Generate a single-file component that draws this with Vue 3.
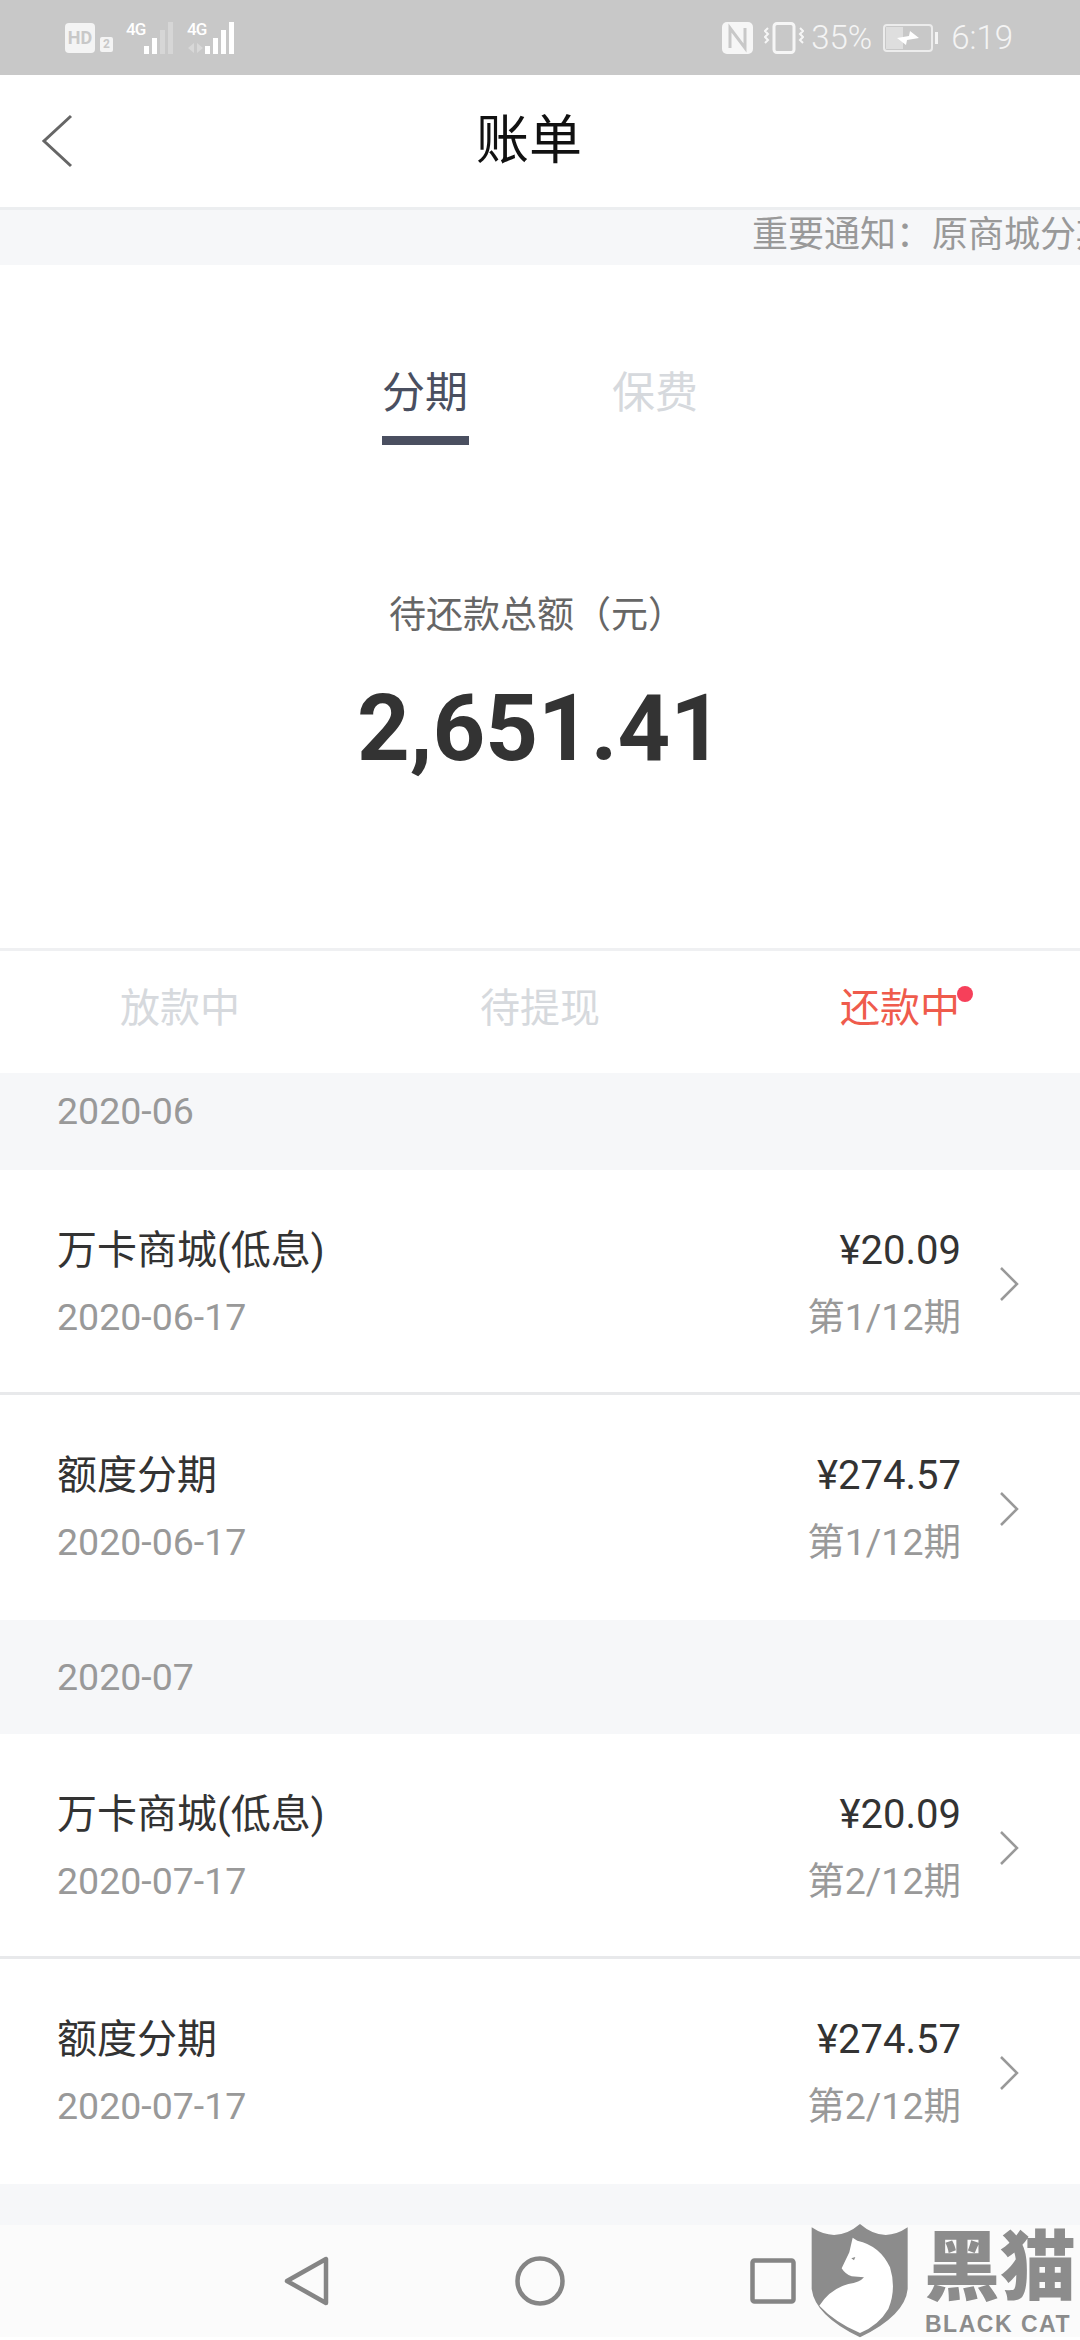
<script setup>
const groups = [
  {
    month: '2020-06',
    cls: 'first',
    bills: [
      { name: '万卡商城(低息)', date: '2020-06-17', amount: '¥20.09', term: '第1/12期' },
      { name: '额度分期', date: '2020-06-17', amount: '¥274.57', term: '第1/12期' }
    ]
  },
  {
    month: '2020-07',
    cls: '',
    bills: [
      { name: '万卡商城(低息)', date: '2020-07-17', amount: '¥20.09', term: '第2/12期' },
      { name: '额度分期', date: '2020-07-17', amount: '¥274.57', term: '第2/12期' }
    ]
  }
]
const signals = [
  { level: 1, arrows: false },
  { level: 3, arrows: true }
]
const barHeights = [8, 16, 24, 32]
</script>

<template>
  <div class="page">
    <div class="status">
      <div class="status-left">
        <span class="hd">HD</span>
        <span class="sim">2</span>
        <div v-for="(s, i) in signals" :key="i" class="signal">
          <div class="net-col">
            <span class="net">4G</span>
            <svg v-if="s.arrows" class="arrows" width="17" height="10" viewBox="0 0 17 10">
              <path d="M7 0v10L1 5zM10 0v10l6-5z" fill="#d8d8d8" />
            </svg>
          </div>
          <svg width="34" height="32" viewBox="0 0 34 32">
            <rect
              v-for="(h, n) in barHeights"
              :key="n"
              :x="n * 8 + 1"
              :y="32 - h"
              width="5"
              :height="h"
              :fill="n <= s.level ? '#ffffff' : '#d6d6d6'"
            />
          </svg>
        </div>
      </div>
      <div class="status-right">
        <svg width="31" height="32" viewBox="0 0 31 32">
          <rect width="31" height="32" rx="5" fill="#f6f6f6" />
          <path d="M8 26V6l15 20V6" fill="none" stroke="#c8c8c8" stroke-width="3" />
        </svg>
        <svg class="vibrate" width="40" height="32" viewBox="0 0 40 32" fill="none" stroke="#f6f6f6">
          <rect x="10" y="1.5" width="20" height="29" rx="3" stroke-width="3" />
          <path d="M4 6l-3 3 3 3-3 3 3 3-3 3M36 6l3 3-3 3 3 3-3 3 3 3" stroke-width="2" />
        </svg>
        <span class="pct">35%</span>
        <svg class="battery" width="56" height="28" viewBox="0 0 56 28">
          <rect x="1" y="1" width="48" height="26" rx="3" fill="none" stroke="#ececec" stroke-width="2" />
          <rect x="3" y="3" width="17" height="22" fill="#dedede" />
          <path d="M14 14l12-2 1-5 9 7-12 2-1 5z" fill="#fff" />
          <rect x="52" y="8" width="3" height="12" fill="#f4f4f4" />
        </svg>
        <span class="time">6:19</span>
      </div>
    </div>

    <div class="nav">
      <svg width="32" height="54" viewBox="0 0 32 54">
        <path d="M30 2L3 27l27 25" fill="none" stroke="#666" stroke-width="3" />
      </svg>
      <span class="nav-title">账单</span>
    </div>

    <div class="notice">
      <span>重要通知：原商城分期</span>
    </div>

    <div class="tabs">
      <div class="tab active">分期</div>
      <div class="tab">保费</div>
    </div>

    <div class="total">
      <div class="total-label">待还款总额（元）</div>
      <div class="total-value">2,651.41</div>
    </div>

    <div class="filters">
      <div class="filter">放款中</div>
      <div class="filter">待提现</div>
      <div class="filter on"><span class="dotted">还款中<i class="dot"></i></span></div>
    </div>

    <template v-for="g in groups" :key="g.month">
      <div class="month" :class="g.cls">{{ g.month }}</div>
      <div
        v-for="(b, i) in g.bills"
        :key="i"
        class="bill"
        :class="{ last: i === g.bills.length - 1 }"
      >
        <div class="bill-left">
          <div class="bill-name">{{ b.name }}</div>
          <div class="bill-sub">{{ b.date }}</div>
        </div>
        <div class="bill-right">
          <div class="bill-name">{{ b.amount }}</div>
          <div class="bill-sub">{{ b.term }}</div>
        </div>
        <svg class="chevron" width="20" height="34" viewBox="0 0 20 34">
          <path d="M2 1l16 16L2 33" fill="none" stroke="#999" stroke-width="2.5" />
        </svg>
      </div>
    </template>

    <div class="tail"></div>

    <div class="sysnav">
      <svg width="46" height="50" viewBox="0 0 46 50">
        <path d="M42 3v44L3 25z" fill="none" stroke="#858585" stroke-width="4.5" stroke-linejoin="round" />
      </svg>
      <svg width="50" height="50" viewBox="0 0 50 50">
        <circle cx="25" cy="25" r="22.5" fill="none" stroke="#858585" stroke-width="4.5" />
      </svg>
      <svg width="46" height="46" viewBox="0 0 46 46">
        <rect x="2.5" y="2.5" width="41" height="41" rx="2" fill="none" stroke="#858585" stroke-width="4.5" />
      </svg>
    </div>

    <div class="mark">
      <svg width="100" height="116" viewBox="90 102 300 348">
        <path d="M95 115Q170 165 240 105Q310 165 383 115V300Q375 380 240 445Q105 380 95 300Z" fill="#8c8c8c" />
        <path
          d="M218 146L232 155Q300 170 330 235Q350 300 325 360Q295 410 240 432Q165 400 118 350Q150 300 205 285Q240 280 252 265L215 262Q195 255 185 238L208 190Z"
          fill="#fff"
        />
        <path d="M214 208l12-4-4 10z" fill="#8c8c8c" />
      </svg>
      <div class="mark-text">
        <div class="mark-cn">黑猫</div>
        <div class="mark-en">BLACK CAT</div>
      </div>
    </div>
  </div>
</template>

<style>
html, body {
  margin: 0;
  background: #fff;
}
</style>

<style scoped>
.page {
  position: relative;
  width: 1080px;
  height: 2340px;
  overflow: hidden;
  background: #fff;
  font-family: Roboto, "Noto Sans CJK SC", sans-serif;
}
.status {
  height: 75px;
  background: #c8c8c8;
  color: #fff;
  display: flex;
  align-items: center;
  justify-content: space-between;
  padding: 0 67px 0 65px;
}
.status-left,
.status-right {
  display: flex;
  align-items: center;
}
.hd {
  width: 30px;
  height: 30px;
  background: #f4f4f4;
  border-radius: 4px;
  color: #c8c8c8;
  font-size: 18px;
  font-weight: 700;
  line-height: 30px;
  text-align: center;
}
.sim {
  width: 13px;
  height: 15px;
  margin: 13px 0 0 5px;
  background: #f4f4f4;
  border-radius: 2px;
  color: #c8c8c8;
  font-size: 12px;
  font-weight: 700;
  line-height: 15px;
  text-align: center;
}
.signal {
  display: flex;
  align-items: flex-start;
  margin-left: 13px;
}
.signal + .signal {
  margin-left: 10px;
}
.net-col {
  width: 17px;
  display: flex;
  flex-direction: column;
}
.net {
  font-size: 17px;
  font-weight: 500;
  line-height: 15px;
  letter-spacing: -1px;
  white-space: nowrap;
}
.arrows {
  margin-top: 6px;
}
.vibrate {
  margin-left: 11px;
}
.pct,
.time {
  font-size: 33px;
  font-weight: 300;
  line-height: 40px;
  color: #f4f4f4;
}
.pct {
  margin-left: 7px;
}
.battery {
  margin-left: 11px;
}
.time {
  margin-left: 12px;
}
.nav {
  height: 132px;
  border-bottom: 3px solid #eceef0;
  display: flex;
  align-items: center;
  padding-left: 41px;
}
.nav-title {
  margin-left: 403px;
  font-size: 53px;
  color: #111;
  line-height: 60px;
}
.notice {
  height: 55px;
  background: #f6f7f9;
  padding-left: 752px;
  overflow: hidden;
  white-space: nowrap;
  font-size: 36px;
  line-height: 50px;
  color: #999;
}
.tabs {
  display: flex;
  justify-content: center;
  gap: 143px;
  padding-top: 97px;
}
.tab {
  width: 87px;
  height: 83px;
  font-size: 43px;
  line-height: 63px;
  text-align: center;
  white-space: nowrap;
  color: #d6d9dd;
  box-sizing: border-box;
}
.tab.active {
  color: #4a4f60;
  border-bottom: 9px solid #4a4f60;
}
.total {
  height: 506px;
  box-sizing: border-box;
  border-bottom: 3px solid #eff0f2;
  display: flex;
  flex-direction: column;
  align-items: center;
  padding-top: 148px;
}
.total-label {
  font-size: 37px;
  line-height: 46px;
  color: #666;
  margin-right: 6px;
}
.total-value {
  margin-top: 35px;
  font-size: 92px;
  font-weight: 700;
  line-height: 110px;
  color: #333;
}
.filters {
  height: 122px;
  display: flex;
}
.filter {
  flex: 1;
  font-size: 40px;
  line-height: 116px;
  text-align: center;
  color: #d6d9dd;
}
.filter.on {
  color: #ef5b4c;
}
.dotted {
  position: relative;
  display: inline-block;
}
.dot {
  position: absolute;
  right: -13px;
  top: 35px;
  width: 16px;
  height: 16px;
  border-radius: 50%;
  background: #f6405a;
}
.month {
  height: 114px;
  background: #f6f7f9;
  padding-left: 57px;
  font-size: 37.5px;
  line-height: 114px;
  color: #999;
}
.month.first {
  height: 97px;
  line-height: 76px;
}
.bill {
  height: 225px;
  box-sizing: border-box;
  border-bottom: 3px solid #e8e9eb;
  display: flex;
  align-items: center;
  padding: 6px 61px 0 57px;
}
.bill.last {
  border-bottom: 0;
  padding-top: 3px;
}
.bill-left {
  flex: 1;
}
.bill-right {
  text-align: right;
}
.bill-name {
  height: 66px;
  font-size: 40px;
  line-height: 66px;
  color: #333;
}
.bill-sub {
  height: 66px;
  font-size: 37.5px;
  line-height: 66px;
  color: #999;
}
.chevron {
  margin-left: 38px;
}
.tail {
  height: 41px;
  background: #f6f7f9;
}
.sysnav {
  height: 112px;
  background: #fbfbfb;
  display: flex;
  align-items: center;
  justify-content: center;
  gap: 185px;
}
.mark {
  position: absolute;
  left: 810px;
  top: 2223px;
  display: flex;
  color: #8c8c8c;
}
.mark-text {
  margin-left: 14px;
  white-space: nowrap;
}
.mark-cn {
  margin-top: 5px;
  font-size: 76px;
  font-weight: 900;
  line-height: 80px;
}
.mark-en {
  font-family: "Liberation Sans", sans-serif;
  font-size: 23px;
  font-weight: 700;
  line-height: 20px;
  letter-spacing: 1.5px;
  margin-top: 6px;
  margin-left: 1px;
}
</style>
